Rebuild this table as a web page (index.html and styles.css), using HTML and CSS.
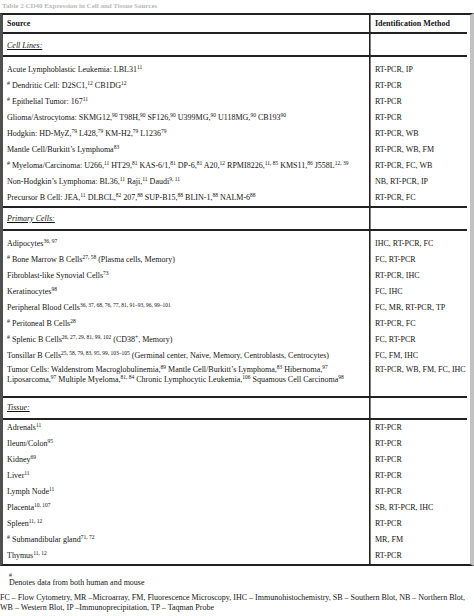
FILE: index.html
```html
<!DOCTYPE html>
<html>
<head>
<meta charset="utf-8">
<link rel="stylesheet" href="styles.css">
</head>
<body>
<div class="title"><span>Table 2 CD40 Expression in Cell and Tissue Sources</span></div>
<div class="sheet">
  <div class="row hdr"><div class="src"><b>Source</b></div><div class="meth"><b>Identification Method</b></div></div>
  <div class="row sec sec1"><div class="src"><i class="lab">Cell Lines:</i></div><div class="meth"></div></div>
  <div class="group g1">
    <div class="row"><div class="src">Acute Lymphoblastic Leukemia: LBL31<sup class="s">11</sup></div><div class="meth">RT-PCR, IP</div></div>
    <div class="row"><div class="src"><sup class="h">#</sup>Dendritic Cell: D2SC1,<sup class="s">12</sup> CB1DG<sup class="s">12</sup></div><div class="meth">RT-PCR</div></div>
    <div class="row"><div class="src"><sup class="h">#</sup>Epithelial Tumor: 167<sup class="s">11</sup></div><div class="meth">RT-PCR</div></div>
    <div class="row"><div class="src">Glioma/Astrocytoma: SKMG12,<sup class="s">90</sup> T98H,<sup class="s">90</sup> SF126,<sup class="s">90</sup> U399MG,<sup class="s">90</sup> U118MG,<sup class="s">90</sup> CB193<sup class="s">90</sup></div><div class="meth">RT-PCR</div></div>
    <div class="row"><div class="src">Hodgkin: HD-MyZ,<sup class="s">79</sup> L428,<sup class="s">79</sup> KM-H2,<sup class="s">79</sup> L1236<sup class="s">79</sup></div><div class="meth">RT-PCR, WB</div></div>
    <div class="row"><div class="src">Mantle Cell/Burkitt’s Lymphoma<sup class="s">83</sup></div><div class="meth">RT-PCR, WB, FM</div></div>
    <div class="row"><div class="src"><sup class="h">#</sup>Myeloma/Carcinoma: U266,<sup class="s">11</sup> HT29,<sup class="s">81</sup> KAS-6/1,<sup class="s">81</sup> DP-6,<sup class="s">81</sup> A20,<sup class="s">12</sup> RPMI8226,<sup class="s">11, 85</sup> KMS11,<sup class="s">86</sup> J558L<sup class="s">12, 39</sup></div><div class="meth">RT-PCR, FC, WB</div></div>
    <div class="row"><div class="src">Non-Hodgkin’s Lymphoma: BL36,<sup class="s">11</sup> Raji,<sup class="s">11</sup> Daudi<sup class="s">9, 11</sup></div><div class="meth">NB, RT-PCR, IP</div></div>
    <div class="row"><div class="src">Precursor B Cell: JEA,<sup class="s">11</sup> DLBCL,<sup class="s">82</sup> 207,<sup class="s">88</sup> SUP-B15,<sup class="s">88</sup> BLIN-1,<sup class="s">88</sup> NALM-6<sup class="s">88</sup></div><div class="meth">RT-PCR, FC</div></div>
  </div>
  <div class="row sec sec2"><div class="src"><i class="lab">Primary Cells:</i></div><div class="meth"></div></div>
  <div class="group g2">
    <div class="row"><div class="src">Adipocytes<sup class="s">36, 97</sup></div><div class="meth">IHC, RT-PCR, FC</div></div>
    <div class="row"><div class="src"><sup class="h">#</sup>Bone Marrow B Cells<sup class="s">27, 58</sup> (Plasma cells, Memory)</div><div class="meth">FC, RT-PCR</div></div>
    <div class="row"><div class="src">Fibroblast-like Synovial Cells<sup class="s">73</sup></div><div class="meth">RT-PCR, IHC</div></div>
    <div class="row"><div class="src">Keratinocytes<sup class="s">98</sup></div><div class="meth">FC, IHC</div></div>
    <div class="row"><div class="src">Peripheral Blood Cells<sup class="s">36, 37, 68, 76, 77, 81, 91–93, 96, 99–101</sup></div><div class="meth">FC, MR, RT-PCR, TP</div></div>
    <div class="row"><div class="src"><sup class="h">#</sup>Peritoneal B Cells<sup class="s">28</sup></div><div class="meth">RT-PCR, FC</div></div>
    <div class="row"><div class="src"><sup class="h">#</sup>Splenic B Cells<sup class="s">26, 27, 29, 81, 99, 102</sup> (CD38<sup class="s">+</sup>, Memory)</div><div class="meth">FC, RT-PCR</div></div>
    <div class="row"><div class="src">Tonsillar B Cells<sup class="s">25, 58, 79, 83, 95, 99, 103–105</sup> (Germinal center, Naive, Memory, Centroblasts, Centrocytes)</div><div class="meth">FC, FM, IHC</div></div>
    <div class="row tall"><div class="src">Tumor Cells: Waldenstrom Macroglobulinemia,<sup class="s">89</sup> Mantle Cell/Burkitt’s Lymphoma,<sup class="s">83</sup> Hibernoma,<sup class="s">97</sup><br>Liposarcoma,<sup class="s">97</sup> Multiple Myeloma,<sup class="s">81, 84</sup> Chronic Lymphocytic Leukemia,<sup class="s">106</sup> Squamous Cell Carcinoma<sup class="s">98</sup></div><div class="meth">RT-PCR, WB, FM, FC, IHC</div></div>
  </div>
  <div class="row sec sec3"><div class="src"><i class="lab">Tissue:</i></div><div class="meth"></div></div>
  <div class="group g3">
    <div class="row"><div class="src">Adrenals<sup class="s">11</sup></div><div class="meth">RT-PCR</div></div>
    <div class="row"><div class="src">Ileum/Colon<sup class="s">95</sup></div><div class="meth">RT-PCR</div></div>
    <div class="row"><div class="src">Kidney<sup class="s">69</sup></div><div class="meth">RT-PCR</div></div>
    <div class="row"><div class="src">Liver<sup class="s">11</sup></div><div class="meth">RT-PCR</div></div>
    <div class="row"><div class="src">Lymph Node<sup class="s">11</sup></div><div class="meth">RT-PCR</div></div>
    <div class="row"><div class="src">Placenta<sup class="s">10, 107</sup></div><div class="meth">SB, RT-PCR, IHC</div></div>
    <div class="row"><div class="src">Spleen<sup class="s">11, 12</sup></div><div class="meth">RT-PCR</div></div>
    <div class="row"><div class="src"><sup class="h">#</sup>Submandibular gland<sup class="s">71, 72</sup></div><div class="meth">MR, FM</div></div>
    <div class="row"><div class="src">Thymus<sup class="s">11, 12</sup></div><div class="meth">RT-PCR</div></div>
  </div>
</div>
<div class="notes">
  <div class="mark">#</div>
  <div class="denote">Denotes data from both human and mouse</div>
  <div class="abbr first">FC – Flow Cytometry, MR –Microarray, FM, Fluorescence Microscopy, IHC – Immunohistochemistry, SB – Southern Blot, NB – Northern Blot,</div>
  <div class="abbr">WB – Western Blot, IP –Immunoprecipitation, TP – Taqman Probe</div>
</div>
</body>
</html>
```
FILE: styles.css
```css
html, body {
  margin: 0;
  padding: 0;
  background: #ffffff;
}
body {
  width: 474px;
  height: 616px;
  overflow: hidden;
  font-family: "Liberation Serif", "Times New Roman", serif;
  font-size: 8px;
  color: #141414;
}
.title {
  height: 13px;
  overflow: hidden;
}
.title span {
  display: block;
  padding: 2px 0 0 2px;
  font-size: 7px;
  line-height: 8px;
  font-weight: bold;
  color: #b8b8b8;
  white-space: nowrap;
}
.sheet {
  box-sizing: border-box;
  width: 474px;
  border-top: 2px solid #222;
  border-bottom: 2px solid #222;
  border-left: 3px solid #505050;
  border-right: 4px solid #c2c2c2;
  padding-right: 3px;
  background: linear-gradient(#222, #222) no-repeat 366px 0 / 1.6px 100%;
}
.row {
  display: grid;
  grid-template-columns: 366px 1fr;
  height: 16px;
  line-height: 16px;
  white-space: nowrap;
}
.src {
  padding-left: 4px;
}
.meth {
  padding-left: 6px;
}
.hdr {
  height: 17px;
  line-height: 17px;
  border-bottom: 2px solid #222;
}
.sec {
  border-bottom: 2px solid #222;
}
.sec1 { height: 21px; line-height: 24px; }
.sec2 { height: 21px; line-height: 21px; }
.sec3 { height: 20px; line-height: 20px; }
.lab {
  text-decoration: underline;
  text-underline-offset: 1px;
  text-decoration-thickness: 0.6px;
}
.group {
  border-bottom: 2px solid #222;
}
.g1 { padding-top: 5px; }
.g2 { padding-top: 5px; }
.g3 { padding-top: 0; border-bottom: none; }
.tall {
  box-sizing: border-box;
  height: 32px;
  line-height: 10px;
  padding-top: 1px;
}
.s {
  font-size: 5.5px;
  line-height: 0;
  vertical-align: 3px;
}
.h {
  font-size: 6px;
  line-height: 0;
  vertical-align: 3px;
  margin-right: 2px;
}
.notes {
  padding-top: 6px;
}
.mark {
  font-size: 6px;
  line-height: 6px;
  padding-left: 9px;
}
.denote {
  line-height: 9px;
  padding-left: 9px;
}
.abbr {
  line-height: 10px;
  white-space: nowrap;
}
.abbr.first {
  margin-top: 6px;
}
```
